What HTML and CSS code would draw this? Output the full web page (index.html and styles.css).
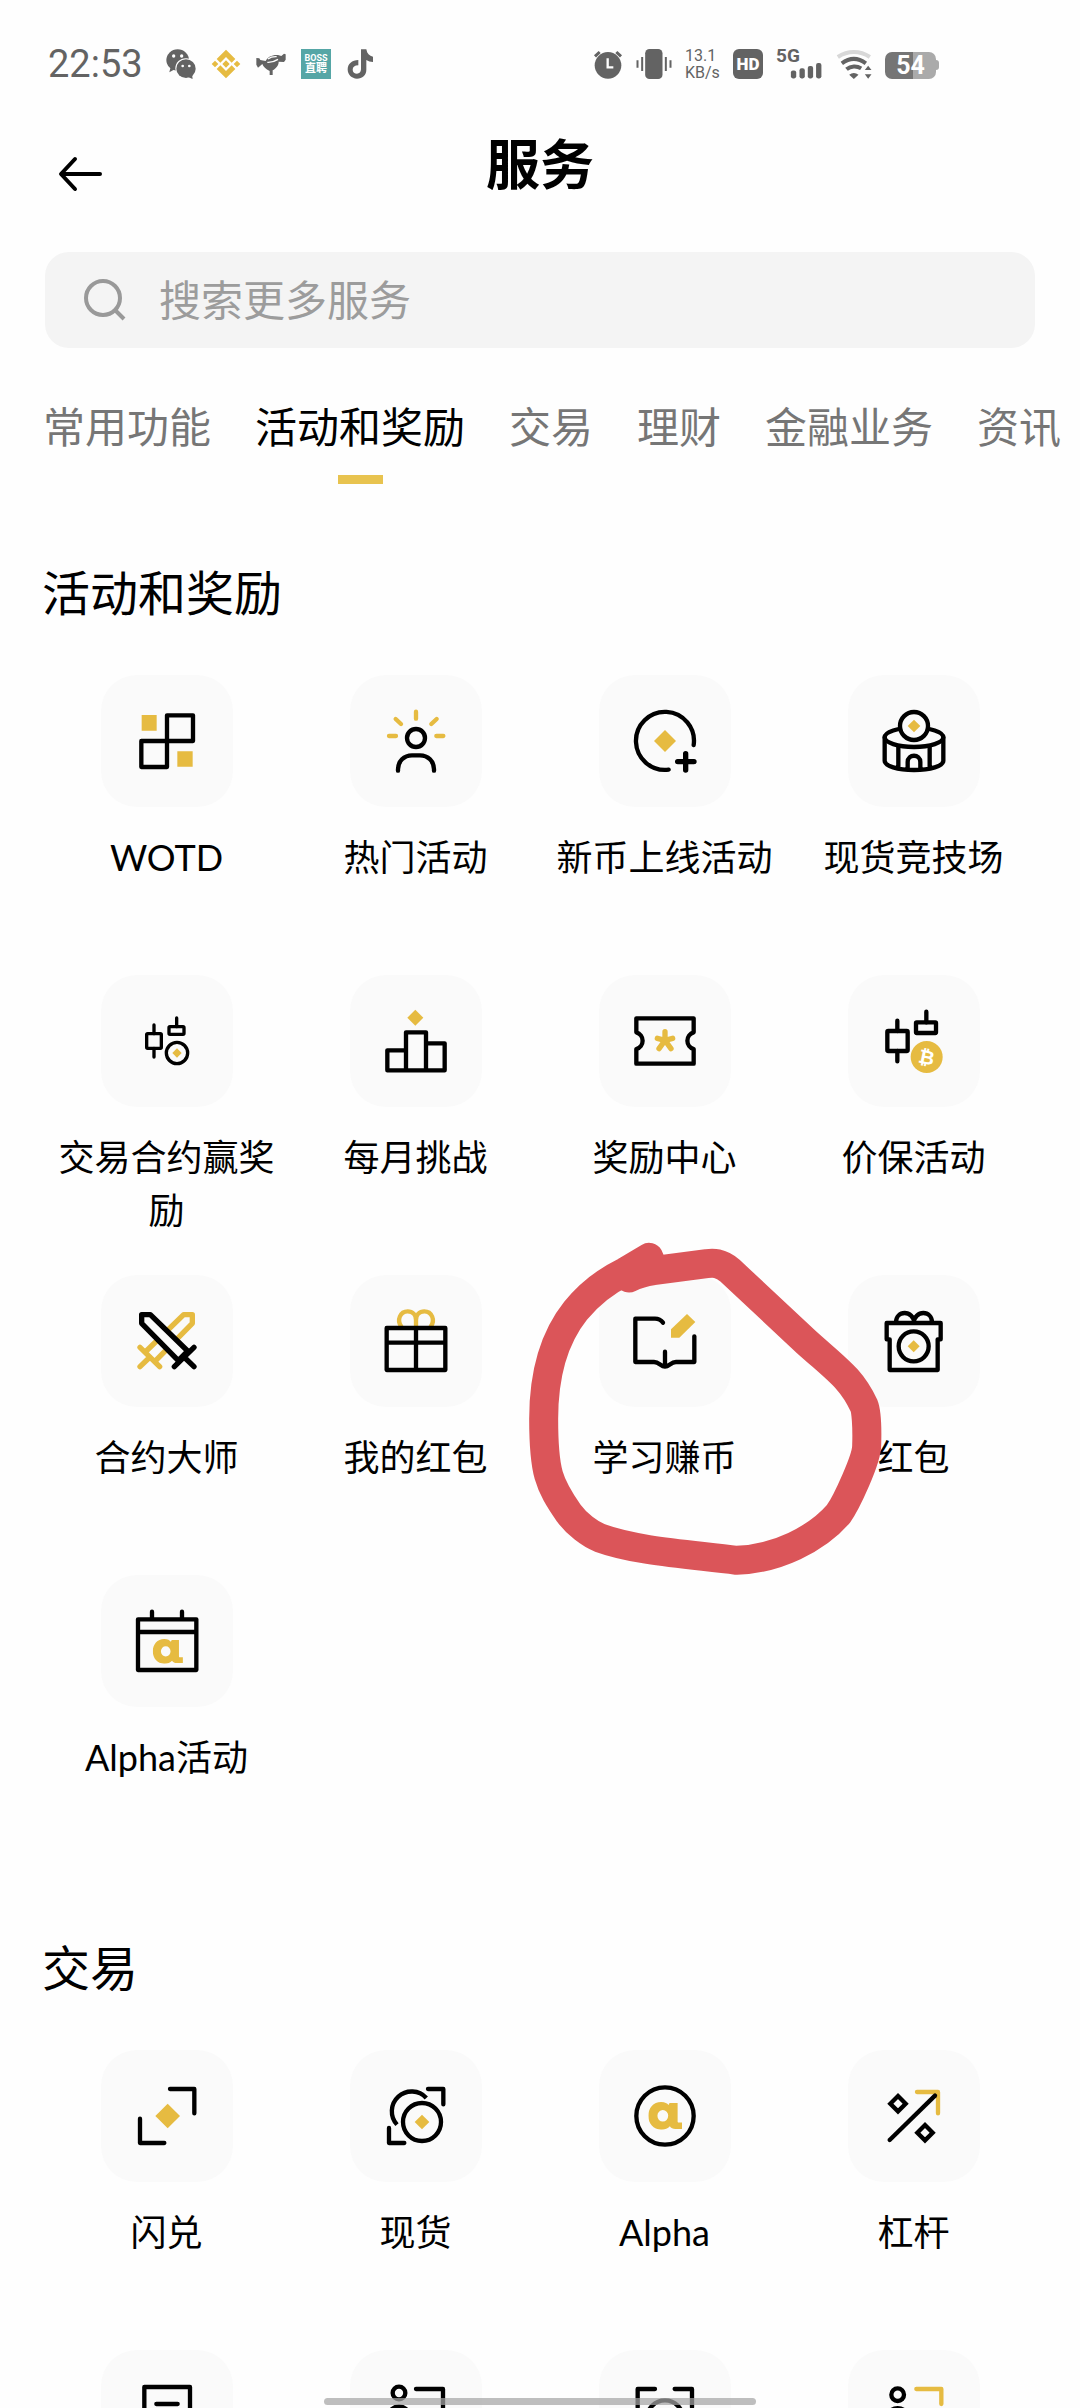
FILE: index.html
```html
<!DOCTYPE html>
<html lang="zh-CN">
<head>
<meta charset="utf-8">
<meta name="viewport" content="width=device-width, initial-scale=1">
<title>服务</title>
<link rel="stylesheet" href="styles.css">
</head>
<body>
<svg class="defs" aria-hidden="true">
  <symbol id="alpha" viewBox="0 0 100 82">
    <path class="gold-fill" fill-rule="evenodd" d="M38 0C50 0 56 4 60 9L63 3H87V58C87 61 89 61 92 61H100V80H80C73 80 67 77 64 72C58 79 50 82 38 82C15 82 0 64 0 41S15 0 38 0ZM43 24A16 17 0 1 0 43 58A16 17 0 1 0 43 24Z"/>
  </symbol>
</svg>
<div class="app">
  <div class="status">
    <span class="time">22:53</span>
    <div class="status-apps">
      <svg class="s30" viewBox="0 0 90 90"><ellipse cx="35" cy="33" rx="34" ry="32"/><path d="M14 54l-4 16 18-10z"/><path class="cut" d="M60 28c18 0 32 13 32 30s-14 31-32 31-32-14-32-31 14-30 32-30z"/><ellipse cx="60" cy="59" rx="29" ry="28"/><path d="M66 84l14 6-2-14z"/><g class="white-fill"><circle cx="23" cy="21" r="5"/><circle cx="47" cy="21" r="5"/><circle cx="50" cy="51" r="4"/><circle cx="70" cy="51" r="4"/></g></svg>
      <svg class="s30 gold-fill" viewBox="0 0 90 90"><path d="M45 2l28 28-11 11-17-17-17 17-11-11zM45 88L17 60l11-11 17 17 17-17 11 11zM45 34l11 11-11 11-11-11zM12 35l10 10-10 10L2 45zM78 35l10 10-10 10-10-10z"/></svg>
      <svg class="s30" viewBox="0 0 90 90"><path d="M1 27l9 1 3 5 16 3c6-12 18-19 37-18l10 3 8-7 5 2v16l-5 7-16-1c0 12-8 20-18 26v14h-9V66c-12-6-19-13-22-21L6 56 1 47z"/><path class="white-line" d="M36 30c10-8 20-7 26-7M34 40c14 1 24-4 32-9"/></svg>
      <span class="boss"><b>BOSS</b><b>直聘</b></span>
      <svg class="s30" viewBox="0 0 90 90"><path d="M45 1h16c2 13 9 20 20 22v16c-8 0-14-2-20-6v29c0 16-12 27-28 27S5 77 5 61s13-28 32-28v16c-11 0-17 5-17 13s6 12 13 12 12-5 12-13z"/></svg>
    </div>
    <div class="status-system">
      <svg class="s30" viewBox="0 0 90 90"><circle cx="45" cy="49" r="40"/><path class="gray-line" d="M6 22L20 9M84 22L70 9"/><path class="white-line thick" d="M44 28v27h17"/></svg>
      <svg class="s36" viewBox="0 0 105 90"><rect x="26" y="0" width="52" height="90" rx="13"/><path class="gray-line thin" d="M3 34v22M17 24v42M88 24v42M102 34v22"/></svg>
      <span class="speed">13.1<br>KB/s</span>
      <span class="hd">HD</span>
      <span class="signal"><span>5G</span><svg viewBox="0 0 102 54"><rect x="0" y="25" width="18" height="27" rx="7"/><rect x="29" y="18" width="18" height="34" rx="7"/><rect x="57" y="10" width="18" height="42" rx="7"/><rect x="85" y="0" width="18" height="52" rx="7"/></svg></span>
      <svg class="s36" viewBox="0 0 105 90"><path class="wifi faint" d="M4 24c30-20 66-20 96 0"/><path class="wifi" d="M16 43c23-17 49-17 72 0M30 61c13-11 31-11 44-3"/><path d="M38 77q14-10 28 0L52 90zM95 50l10 13H85zM95 89L85 76h20z"/></svg>
      <span class="battery"><span class="level">54</span></span>
    </div>
  </div>

  <header class="header">
    <button class="back" type="button" aria-label="返回"><svg viewBox="0 0 44 36"><path d="M17 3L3 18l14 15M4 18h38"/></svg></button>
    <h1>服务</h1>
  </header>

  <main class="content">
    <label class="search">
      <svg viewBox="0 0 42 42"><circle cx="19" cy="19" r="17"/><path d="M31 31l9 9"/></svg>
      <input type="search" placeholder="搜索更多服务">
    </label>

    <nav class="tabs">
      <a href="#common">常用功能</a>
      <a href="#rewards" class="active">活动和奖励</a>
      <a href="#trade">交易</a>
      <a href="#earn">理财</a>
      <a href="#finance">金融业务</a>
      <a href="#news">资讯</a>
    </nav>

    <section class="group" id="rewards">
      <h2>活动和奖励</h2>
      <div class="grid">
        <a class="item" href="#"><svg class="tile" viewBox="0 0 396 396"><path d="M198 121h78v77h-78zM121 198h77v78h-77z"/><path class="gold-fill" d="M122 120h45v47h-45zM229 229h46v46h-46z"/></svg><span>WOTD</span></a>
        <a class="item" href="#"><svg class="tile" viewBox="0 0 396 396"><circle cx="198" cy="189" r="27"/><path d="M144 287v-4c0-24 18-42 42-42h24c24 0 42 18 42 42v4"/><path class="gold" d="M198 110v21M117 183h21M259 183h21M137 132l16 15M260 132l-16 15"/></svg><span>热门活动</span></a>
        <a class="item" href="#"><svg class="tile" viewBox="0 0 396 396"><path d="M284 210A87 87 0 1 0 209 284"/><path class="bold" d="M260 236v49M236 260h49"/><path class="gold-fill" d="M198 165l33 33-33 33-33-33z"/></svg><span>新币上线活动</span></a>
        <a class="item" href="#"><svg class="tile" viewBox="0 0 396 396"><ellipse cx="198" cy="187" rx="88" ry="29"/><path d="M110 187v70c0 16 39 28 88 28s88-12 88-28v-70M151 214v64M245 214v64M179 283v-22c0-25 38-25 38 0v22"/><circle class="backed" cx="198" cy="153" r="42"/><path class="gold-fill" d="M198 134l19 19-19 19-19-19z"/></svg><span>现货竞技场</span></a>

        <a class="item" href="#"><svg class="tile" viewBox="0 0 396 396"><g class="fine"><rect x="137" y="176" width="44" height="44" rx="3"/><rect x="204" y="155" width="45" height="23" rx="3"/><path d="M159 150v26M159 220v26M227 129v26"/><circle cx="228" cy="234" r="32"/></g><path class="gold-fill" d="M228 220l14 14-14 14-14-14z"/></svg><span>交易合约赢奖励</span></a>
        <a class="item" href="#"><svg class="tile" viewBox="0 0 396 396"><path d="M112 286v-60h56v60zM168 286V172h60v114zM228 286v-81h56v81z"/><path class="gold-fill" d="M196 104l24 24-24 24-24-24z"/></svg><span>每月挑战</span></a>
        <a class="item" href="#"><svg class="tile" viewBox="0 0 396 396"><path d="M112 130h172v42A26 26 0 0 0 284 222v44H112v-44A26 26 0 0 0 112 172z"/><path class="gold bold" d="M198 196v-26M198 196l-23-6M198 196l23-6M198 196l-18 25M198 196l18 25"/></svg><span>奖励中心</span></a>
        <a class="item" href="#"><svg class="tile" viewBox="0 0 396 396"><rect x="118" y="168" width="61" height="60" rx="3"/><rect x="204" y="142" width="60" height="32" rx="2"/><path d="M148 137v31M148 228v31M235 110v32"/><circle class="gold-fill" cx="236" cy="246" r="48"/><text class="coin" x="236" y="267" transform="rotate(12 236 246)">₿</text></svg><span>价保活动</span></a>

        <a class="item" href="#"><svg class="tile" viewBox="0 0 396 396"><g class="bold"><path class="gold" d="M136 228L248 119h26v26L164 257M117 217l59 58M147 246l-30 29"/><path class="backed" d="M260 228L148 119h-26v26L232 257z"/><path d="M279 217l-59 58M249 246l30 29"/></g></svg><span>合约大师</span></a>
        <a class="item" href="#"><svg class="tile" viewBox="0 0 396 396"><path class="gold" d="M154 155c-15-20-3-46 19-46 15 0 25 11 25 26v22-22c0-15 10-26 25-26 22 0 34 26 19 46"/><path d="M110 159h176v126H110zM110 203h176M198 159v126"/></svg><span>我的红包</span></a>
        <a class="item" href="#"><svg class="tile" viewBox="0 0 396 396"><path d="M192 143c-6-8-13-12-24-12h-59v130h56c16 0 20 14 33 14s17-14 33-14h55v-77M198 230v45"/><path class="gold-fill" d="M264 117l25 24-48 47h-25v-25z"/></svg><span>学习赚币</span></a>
        <a class="item" href="#"><svg class="tile" viewBox="0 0 396 396"><path d="M116 144h162v49h-9v92H125v-92h-9zM144 142c0-18 12-28 26-28s28 12 28 28c0-16 14-28 28-28s26 10 26 28"/><circle cx="197" cy="214" r="45"/><path class="gold-fill" d="M197 196l18 18-18 18-18-18z"/></svg><span>红包</span></a>

        <a class="item" href="#"><svg class="tile" viewBox="0 0 396 396"><path d="M111 133h175v152H111zM111 171h175M153 110v23M243 110v23"/><use href="#alpha" x="155" y="192" width="91" height="74"/></svg><span>Alpha活动</span></a>

        <svg class="scribble" viewBox="0 0 1170 1140"><path d="M417 115L345 158C280 190 235 228 197 275C125 365 101 480 101 600C101 760 116 795 176 882C200 915 240 945 270 957C380 997 540 1006 680 1024C800 1020 920 960 985 885C1010 850 1070 720 1070 680C1072 620 1068 575 1062 560C1025 480 985 455 890 370L660 155C630 130 610 132 590 134L430 155C405 159 385 163 357 177"/></svg>
      </div>
    </section>

    <section class="group" id="trade">
      <h2>交易</h2>
      <div class="grid">
        <a class="item" href="#"><svg class="tile" viewBox="0 0 396 396"><path d="M207 117h73v73M117 206v73h73"/><path class="gold-fill" d="M200 161l37 37-37 37-37-37z"/></svg><span>闪兑</span></a>
        <a class="item" href="#"><svg class="tile" viewBox="0 0 396 396"><path class="butt" d="M229 144A56 56 0 1 0 141 224"/><path d="M234 117h46v46M117 234v45h46"/><circle cx="216" cy="216" r="57"/><path class="gold-fill" d="M216 194l22 22-22 22-22-22z"/></svg><span>现货</span></a>
        <a class="item" href="#"><svg class="tile" viewBox="0 0 396 396"><circle cx="198" cy="198" r="86"/><use href="#alpha" x="148" y="156" width="101" height="83"/></svg><span>Alpha</span></a>
        <a class="item" href="#"><svg class="tile" viewBox="0 0 396 396"><path class="miter" d="M150 138l23 23-23 23-23-23zM231 225l23 23-23 23-23-23z"/><path class="gold" d="M207 126h63v64"/><path d="M125 270l136-133"/></svg><span>杠杆</span></a>

        <a class="item" href="#"><svg class="tile" viewBox="0 0 396 396"><path d="M130 111h137v174H130zM166 162h64"/></svg></a>
        <a class="item" href="#"><svg class="tile" viewBox="0 0 396 396"><circle cx="147" cy="129" r="19"/><path d="M198 117h81v74M117 208v-10c0-38 60-38 60 0v10"/></svg></a>
        <a class="item" href="#"><svg class="tile" viewBox="0 0 396 396"><path d="M168 117h-52v54M227 117h52v54"/><circle cx="198" cy="205" r="54"/></svg></a>
        <a class="item" href="#"><svg class="tile" viewBox="0 0 396 396"><circle cx="149" cy="134" r="19"/><path class="gold" d="M205 117h75v45"/><path d="M119 213v-10c0-38 60-38 60 0v10"/></svg></a>
      </div>
    </section>
  </main>
  <div class="home-bar"></div>
</div>
</body>
</html>
```
FILE: styles.css
```css
:root {
  --gold: #e6bb41;
  --gray: #636363;
  --tile: #fafafa;
}

* { box-sizing: border-box; }

body {
  margin: 0;
  background: #fefefe;
  color: #000;
  font-family: Lato, "Noto Sans CJK SC", sans-serif;
}

a { color: inherit; text-decoration: none; }

.defs { position: absolute; width: 0; height: 0; }

.app {
  position: relative;
  display: flex;
  flex-direction: column;
  height: 100vh;
  overflow: hidden;
}

/* Status bar */
.status {
  flex: none;
  display: flex;
  align-items: center;
  height: 120px;
  padding: 8px 141px 0 48px;
  color: var(--gray);
  fill: var(--gray);
  font-family: Roboto, "Noto Sans CJK SC", sans-serif;
}
.time { width: 118px; font-size: 38px; line-height: 40px; }
.status-apps { display: flex; align-items: center; gap: 15px; }
.status-system { display: flex; align-items: center; gap: 13px; margin-left: auto; }
.s30 { width: 30px; height: 30px; overflow: visible; }
.s36 { width: 36px; height: 30px; overflow: visible; }
.cut, .white-fill { fill: #fefefe; }
.white-line { fill: none; stroke: #fefefe; stroke-width: 4; }
.white-line.thick { stroke-width: 7; }
.gray-line { fill: none; stroke: var(--gray); stroke-width: 9; }
.gray-line.thin { stroke-width: 6; }
.wifi { fill: none; stroke: var(--gray); stroke-width: 12; }
.wifi.faint { stroke: #d8d8d8; }
.boss {
  display: flex;
  flex-direction: column;
  align-items: center;
  justify-content: center;
  width: 30px;
  height: 30px;
  background: #55a6a6;
  color: #fff;
  font-size: 11px;
  line-height: 12px;
}
.boss b:first-child { font-size: 9px; line-height: 10px; }
.speed { width: 35px; font-size: 16px; line-height: 17px; white-space: nowrap; }
.hd {
  width: 30px;
  height: 30px;
  border-radius: 6px;
  background: var(--gray);
  color: #fff;
  font-size: 17px;
  font-weight: 900;
  line-height: 31px;
  text-align: center;
}
.signal {
  display: flex;
  flex-direction: column;
  width: 47px;
  height: 30px;
  font-size: 19px;
  font-weight: 700;
  line-height: 14px;
}
.signal svg { align-self: flex-end; width: 34px; height: 18px; }
.battery {
  display: flex;
  width: 51px;
  height: 27px;
  margin: 2px 3px 0 0;
  border-radius: 7px;
  background: linear-gradient(90deg, #757575 54%, #aaa 54%);
  color: #fff;
  font-size: 25px;
  font-weight: 700;
  line-height: 28px;
}
.battery::after {
  content: "";
  flex: none;
  width: 3px;
  height: 10px;
  margin: 8px -3px 0 0;
  border-radius: 0 3px 3px 0;
  background: #aaa;
}
.level { flex: 1; text-align: center; }

/* Title row */
.header {
  flex: none;
  display: grid;
  grid-template-columns: 1fr auto 1fr;
  align-items: center;
  height: 90px;
  padding: 0 42px;
}
.header h1 { margin: 0; font-size: 54px; font-weight: 700; line-height: 80px; }
.back { justify-self: start; padding: 18px 16px 0; border: 0; background: none; }
.back svg {
  display: block;
  width: 44px;
  height: 36px;
  fill: none;
  stroke: #000;
  stroke-width: 4;
  stroke-linecap: round;
  stroke-linejoin: round;
}

.content { flex: 1; min-height: 0; overflow-y: auto; scrollbar-width: none; }

/* Search */
.search {
  display: flex;
  align-items: center;
  gap: 33px;
  height: 96px;
  margin: 42px 45px 0;
  padding: 0 39px;
  border-radius: 24px;
  background: #f4f4f4;
}
.search svg { flex: none; width: 42px; height: 42px; fill: none; stroke: #999; stroke-width: 4; }
.search input {
  flex: 1;
  min-width: 0;
  padding: 0;
  border: 0;
  outline: 0;
  background: none;
  font: inherit;
  font-size: 42px;
}
.search input::placeholder { color: #9c9c9c; opacity: 1; }

/* Tabs */
.tabs {
  display: flex;
  gap: 44px;
  height: 152px;
  padding: 49px 0 0 43px;
  overflow: hidden;
  color: #767676;
  font-size: 42px;
  line-height: 60px;
  white-space: nowrap;
}
.tabs a { flex: none; }
.tabs .active { color: #000; }
.tabs .active::after {
  content: "";
  display: block;
  width: 45px;
  height: 9px;
  margin: 18px auto 0;
  background: #e8c34f;
}

/* Service groups */
.group { padding: 57px 42px 0; }
.group h2 { margin: 0 0 46px; font-size: 48px; font-weight: 400; line-height: 72px; }
.grid {
  position: relative;
  display: grid;
  grid-template-columns: repeat(4, 1fr);
  grid-auto-rows: 300px;
}
.item {
  display: flex;
  flex-direction: column;
  align-items: center;
  gap: 24px;
  padding: 0 14px;
  font-size: 36px;
  line-height: 53px;
  text-align: center;
}
.tile {
  flex: none;
  width: 132px;
  height: 132px;
  border-radius: 36px;
  background: var(--tile);
  fill: none;
  stroke: #000;
  stroke-width: 13;
  stroke-linecap: round;
  stroke-linejoin: round;
}
.fine { stroke-width: 10; }
.bold { stroke-width: 16; }
.butt { stroke-linecap: butt; }
.miter { stroke-linejoin: miter; }
.backed { fill: var(--tile); }
.gold { stroke: var(--gold); }
.gold-fill { fill: var(--gold); stroke: none; }
.coin {
  fill: #fff;
  stroke: none;
  font-family: "DejaVu Sans", sans-serif;
  font-size: 58px;
  font-weight: 700;
  text-anchor: middle;
}

/* Hand-drawn ring around the third item of the third row */
.scribble {
  position: absolute;
  top: 544px;
  left: 468px;
  width: 390px;
  height: 380px;
  fill: none;
  stroke: #db5559;
  stroke-width: 87;
  stroke-linecap: round;
  stroke-linejoin: round;
  pointer-events: none;
}

.home-bar {
  position: absolute;
  bottom: 3px;
  left: 30%;
  width: 40%;
  height: 7px;
  border-radius: 4px;
  background: rgba(165, 165, 165, 0.72);
}
```
